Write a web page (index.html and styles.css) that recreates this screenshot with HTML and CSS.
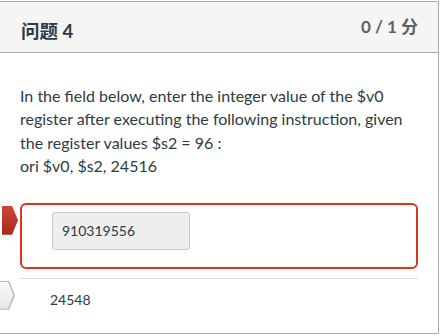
FILE: index.html
```html
<!DOCTYPE html>
<html>
<head>
<meta charset="utf-8">
<link rel="stylesheet" href="styles.css">
</head>
<body>
<div class="card">
  <div class="header">
    <div class="title">问题 4</div>
    <div class="score">0 / 1 分</div>
  </div>
  <div class="body">
    <p class="question">In the field below, enter the integer value of the $v0 register after executing the following instruction, given the register values $s2 = 96 :<br>ori $v0, $s2, 24516</p>
    <div class="answer wrong">
      <span class="marker red"></span>
      <div class="input">910319556</div>
    </div>
    <div class="answer correct">
      <span class="marker grey"></span>
      <div class="value">24548</div>
    </div>
  </div>
</div>
</body>
</html>
```
FILE: styles.css
```css
html, body {
  margin: 0;
  padding: 0;
  background: #ffffff;
}
body {
  font-family: Lato, "Noto Sans CJK SC", sans-serif;
  color: #2d3b45;
}
.card {
  margin-top: 1px;
  width: 439px;
  height: 333px;
  box-sizing: border-box;
  border-top: 1px solid #ababab;
  border-right: 1px solid #ababab;
  border-bottom: 1px solid #ababab;
  position: relative;
}
.header {
  height: 51px;
  box-sizing: border-box;
  background: #f5f5f5;
  border-bottom: 1px solid #ababab;
  display: flex;
  justify-content: space-between;
  align-items: flex-start;
  padding: 0 20px 0 21px;
}
.title {
  font-size: 18.5px;
  font-weight: bold;
  color: #2d3b45;
  margin-top: 17px;
  line-height: 24px;
}
.score {
  font-size: 17px;
  font-weight: bold;
  color: #5b6166;
  margin-top: 15px;
  line-height: 20px;
}
.body {
  padding: 0 20px;
}
.question {
  margin: 0;
  padding-top: 31px;
  font-size: 16px;
  line-height: 23.4px;
}
.answer {
  position: relative;
}
.wrong {
  margin-top: 25px;
  height: 66px;
  box-sizing: border-box;
  border: 2px solid #e0321f;
  border-radius: 6px;
  padding: 7px 0 0 30px;
}
.input {
  width: 138px;
  height: 38px;
  box-sizing: border-box;
  background: #eeeeee;
  border: 1px solid #c8c8c8;
  border-radius: 3px;
  font-size: 14px;
  line-height: 36px;
  padding-left: 9px;
  color: #2d3b45;
}
.correct {
  margin-top: 9px;
  border-top: 1px solid #dcdcdc;
  height: 40px;
  padding-left: 30px;
  display: flex;
  align-items: center;
}
.value {
  font-size: 14px;
  margin-top: 2px;
}
.marker {
  position: absolute;
  left: -20px;
  width: 16px;
}
.marker.red {
  top: 1px;
  height: 29px;
  background: linear-gradient(#d0473a, #a8271c);
  clip-path: polygon(0 0, 10px 0, 16px 50%, 10px 100%, 0 100%);
}
.marker.grey {
  top: 2px;
  height: 29px;
  background: #b5b5b5;
  clip-path: polygon(0 0, 9px 0, 15px 50%, 9px 100%, 0 100%);
}
.marker.grey::after {
  content: "";
  position: absolute;
  inset: 1px 1px 1px 0;
  background: linear-gradient(#fafafa, #e6e6e6);
  clip-path: polygon(0 0, 8px 0, 13.5px 50%, 8px 100%, 0 100%);
}
```
